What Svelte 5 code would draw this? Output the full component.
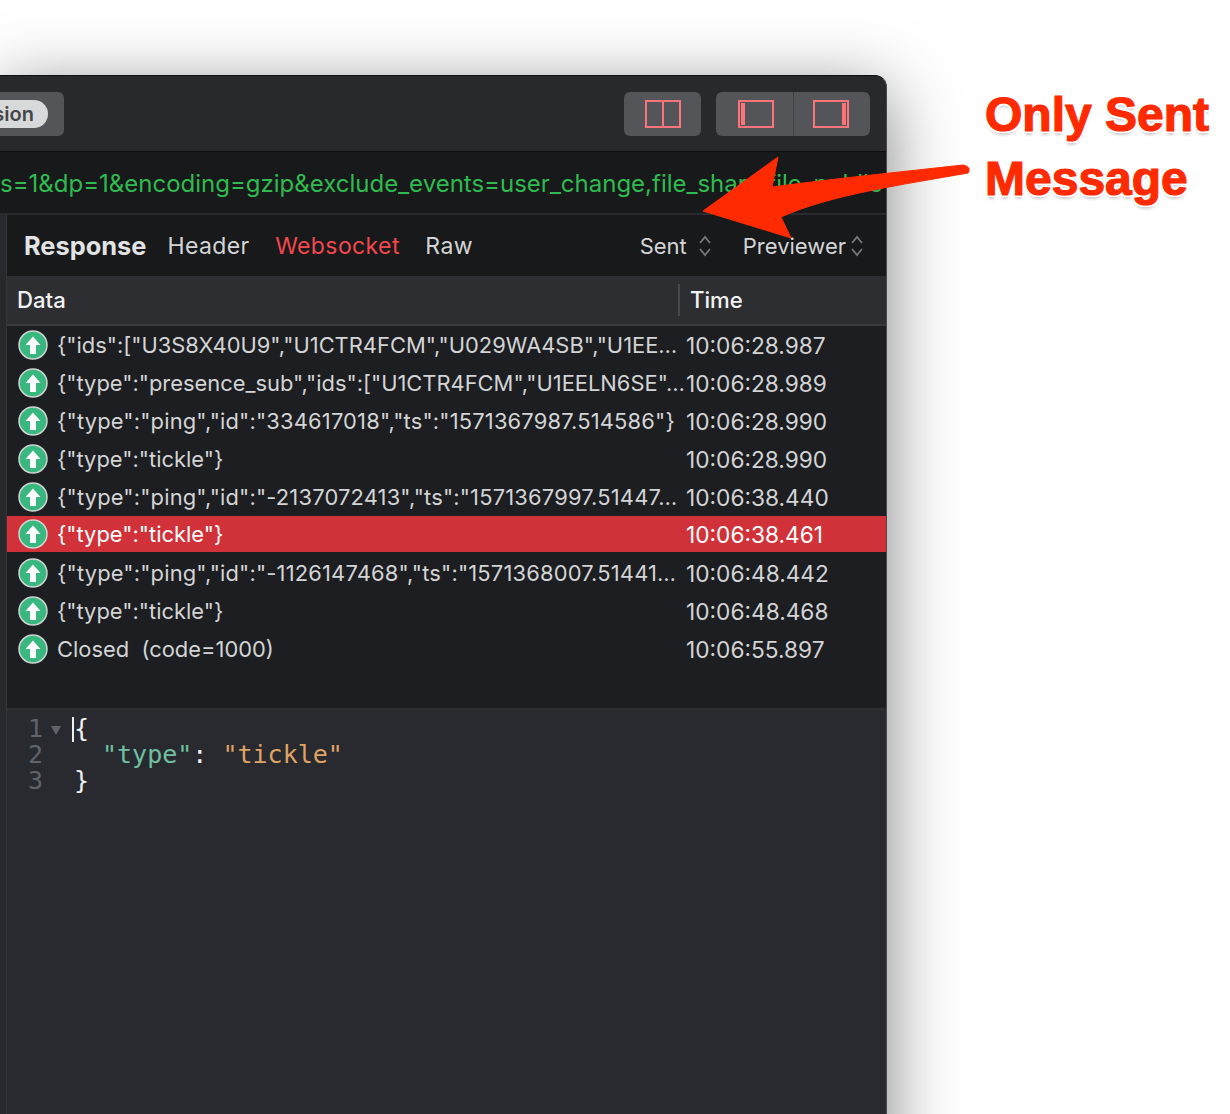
<script lang="ts">
  const rows = [
    { data: '{"ids":["U3S8X40U9","U1CTR4FCM","U029WA4SB","U1EE…', time: "10:06:28.987" },
    { data: '{"type":"presence_sub","ids":["U1CTR4FCM","U1EELN6SE"…', time: "10:06:28.989" },
    { data: '{"type":"ping","id":"334617018","ts":"1571367987.514586"}', time: "10:06:28.990", wide: true },
    { data: '{"type":"tickle"}', time: "10:06:28.990" },
    { data: '{"type":"ping","id":"-2137072413","ts":"1571367997.51447…', time: "10:06:38.440", wide: true },
    { data: '{"type":"tickle"}', time: "10:06:38.461", selected: true },
    { data: '{"type":"ping","id":"-1126147468","ts":"1571368007.51441…', time: "10:06:48.442", wide: true },
    { data: '{"type":"tickle"}', time: "10:06:48.468" },
    { data: "Closed  (code=1000)", time: "10:06:55.897" }
  ];
</script>

<div class="page">
  <div class="window">
    <div class="toolbar">
      <div class="session"><span class="pill">Session</span></div>
      <div class="layouts">
        <div class="btn">
          <svg width="38" height="30" viewBox="0 0 38 30"><path d="M2 2h34v26H2zM19 2v26" /></svg>
        </div>
        <div class="btn-group">
          <div class="btn">
            <svg width="38" height="30" viewBox="0 0 38 30"><path d="M2 2h34v26H2z" /><rect x="4" y="4" width="4" height="22" /></svg>
          </div>
          <div class="btn">
            <svg width="38" height="30" viewBox="0 0 38 30"><path d="M2 2h34v26H2z" /><rect x="30" y="4" width="4" height="22" /></svg>
          </div>
        </div>
      </div>
    </div>

    <div class="url">s=1&amp;dp=1&amp;encoding=gzip&amp;exclude_events=user_change,file_share,file_public</div>

    <div class="content">
      <div class="tabs">
        <span class="title">Response</span>
        <span class="tab">Header</span>
        <span class="tab active">Websocket</span>
        <span class="tab">Raw</span>
        <span class="select sent">Sent
          <svg width="14" height="22" viewBox="0 0 14 22"><path d="M2 8l5-6 5 6M2 14l5 6 5-6" /></svg>
        </span>
        <span class="select">Previewer
          <svg width="14" height="22" viewBox="0 0 14 22"><path d="M2 8l5-6 5 6M2 14l5 6 5-6" /></svg>
        </span>
      </div>

      <div class="head">
        <div class="head-data">Data</div>
        <div class="head-time">Time</div>
      </div>

      <div class="list">
        {#each rows as row}
          <div class="row" class:selected={row.selected}>
            <svg class="up" width="30" height="30" viewBox="0 0 30 30">
              <circle cx="15" cy="15" r="14" fill="#38b77f" stroke="#cfd3d1" stroke-width="1.5" />
              <path d="M15 6.500L22.500 15H18V24H12V15H7.500Z" fill="#fff" />
            </svg>
            <span class="data" class:wide={row.wide}>{row.data}</span>
            <span class="time">{row.time}</span>
          </div>
        {/each}
      </div>

      <div class="editor">
        <div class="gutter">
          <div class="ln">1<i class="fold"></i></div>
          <div class="ln">2</div>
          <div class="ln">3</div>
        </div>
        <div class="code">
          <div class="line"><span class="caret"></span>{"{"}</div>
          <div class="line"><span class="key">"type"</span>: <span class="str">"tickle"</span></div>
          <div class="line">{"}"}</div>
        </div>
      </div>
    </div>
  </div>

  <svg class="arrow" width="1230" height="1114" viewBox="0 0 1230 1114">
    <path d="M703 211L778 157L772 187C840 178 900 172 963 165Q972 167 968 173C900 185 830 195 781 217L791 238Z" />
  </svg>
  <div class="note">Only Sent<br />Message</div>
</div>

<style>
  :global(body) {
    margin: 0;
    background: #fff;
  }

  .page {
    position: relative;
    height: 1114px;
    overflow: hidden;
    padding-top: 75px;
    box-sizing: border-box;
    font-family: Inter, "Liberation Sans", sans-serif;
  }

  .window {
    width: 887px;
    height: 1100px;
    box-sizing: border-box;
    background: #28292d;
    border: 1px solid #111;
    border-left: 0;
    border-right-color: #4a4b4e;
    border-radius: 0 12px 0 0;
    box-shadow: 0 16px 70px rgba(0, 0, 0, 0.5);
    overflow: hidden;
  }

  .toolbar {
    height: 76px;
    box-sizing: border-box;
    display: flex;
    justify-content: space-between;
    padding: 16px 16px 0 0;
    border-bottom: 1px solid #0e0e10;
  }

  .session {
    height: 44px;
    width: 104px;
    margin-left: -40px;
    background: #545559;
    border-radius: 6px;
    display: flex;
    align-items: center;
    justify-content: flex-end;
    padding-right: 16px;
    box-sizing: border-box;
  }

  .pill {
    background: #d8d9da;
    color: #45464a;
    font-size: 20px;
    font-weight: 600;
    height: 28px;
    line-height: 28px;
    padding: 0 14px;
    border-radius: 14px;
  }

  .layouts {
    display: flex;
    gap: 15px;
  }

  .btn-group {
    display: flex;
  }

  .btn {
    width: 77px;
    height: 44px;
    background: #545559;
    border-radius: 6px;
    display: flex;
    align-items: center;
    justify-content: center;
    box-sizing: border-box;
  }

  .btn-group .btn {
    border-radius: 6px 0 0 6px;
    padding-left: 2px;
  }

  .btn-group .btn + .btn {
    border-left: 1px solid #3e3f43;
    border-radius: 0 6px 6px 0;
    padding: 0 3px 0 0;
  }

  .btn svg path {
    fill: none;
    stroke: #fc747a;
    stroke-width: 2;
  }

  .btn svg rect {
    fill: #fc747a;
  }

  .url {
    height: 63px;
    line-height: 64px;
    box-sizing: border-box;
    background: #18191b;
    color: #2fbb4f;
    font-size: 24px;
    white-space: nowrap;
    overflow: hidden;
    border-bottom: 2px solid #2a2b2e;
  }

  .content {
    margin-left: 6px;
    border-left: 1px solid #36373a;
    background: #1d1e21;
    height: 900px;
  }

  .tabs {
    height: 61px;
    background: #18191b;
    display: flex;
    align-items: center;
    padding: 0 22px 0 17px;
    color: #d4d5d6;
    font-size: 23px;
  }

  .title {
    font-weight: 700;
    font-size: 25.400px;
    color: #e2e3e4;
    margin-right: 21px;
  }

  .tab {
    margin-right: 25.500px;
    letter-spacing: 0.4px;
  }

  .tab.active {
    color: #f4474d;
  }

  .select {
    display: flex;
    align-items: center;
    gap: 4px;
    font-size: 22px;
  }

  .sent {
    margin-left: auto;
    margin-right: 31px;
    gap: 11px;
  }

  .select svg path {
    fill: none;
    stroke: #77787b;
    stroke-width: 1.800;
  }

  .head {
    height: 50px;
    box-sizing: border-box;
    background: #2d2e32;
    border-bottom: 2px solid #3a3b3e;
    display: flex;
    align-items: center;
    color: #f2f2f3;
    font-size: 22.200px;
    font-weight: 500;
  }

  .head-data {
    width: 671px;
    padding-left: 10px;
    box-sizing: border-box;
    line-height: 32px;
  }

  .head-time {
    height: 32px;
    line-height: 32px;
    padding-left: 10px;
    border-left: 2px solid #47484b;
  }

  .list {
    height: 384px;
    box-sizing: border-box;
    border-bottom: 2px solid #2e2f33;
  }

  .row {
    height: 38px;
    display: flex;
    align-items: center;
    padding-left: 11px;
    color: #d3d4d5;
    font-size: 21.900px;
    white-space: pre;
  }

  .row.selected {
    height: 36px;
    margin-bottom: 2px;
    background: #d13239;
    color: #fff;
  }

  .up {
    flex: none;
    margin-right: 9px;
  }

  .data {
    width: 629px;
    flex: none;
    overflow: hidden;
  }

  .data.wide {
    letter-spacing: 0.18px;
  }

  .time {
    font-size: 22.700px;
  }

  .editor {
    display: flex;
    background: #282a2f;
    height: 450px;
    padding-top: 6px;
    box-sizing: border-box;
    font-family: "DejaVu Sans Mono", monospace;
    font-size: 25px;
    line-height: 26px;
  }

  .gutter {
    width: 65px;
    flex: none;
    color: #5f636b;
    padding-left: 21px;
    box-sizing: border-box;
  }

  .ln {
    position: relative;
  }

  .fold {
    position: absolute;
    left: 23px;
    top: 10px;
    width: 0;
    height: 0;
    border: 5.500px solid transparent;
    border-top: 9px solid #5f636b;
    border-bottom: 0;
  }

  .code {
    color: #f0f0f0;
  }

  .line {
    position: relative;
    padding-left: 2px;
    white-space: pre;
  }

  .caret {
    position: absolute;
    left: 0;
    top: 1px;
    width: 2px;
    height: 25px;
    background: #f0f0f0;
  }

  .key {
    margin-left: 28px;
    color: #6fc0a2;
  }

  .str {
    color: #dfa264;
  }

  .arrow {
    position: absolute;
    left: 0;
    top: 0;
    pointer-events: none;
  }

  .arrow path {
    fill: #ff2a00;
    stroke: #ff2a00;
    stroke-width: 1;
    stroke-linejoin: round;
  }

  .note {
    position: absolute;
    left: 985px;
    top: 83px;
    font-family: "Liberation Sans", Arial, sans-serif;
    font-weight: 700;
    font-size: 48px;
    line-height: 64px;
    color: #ff2a00;
    -webkit-text-stroke: 1.200px #ff2a00;
    text-shadow:
      2px 0 #fff, -2px 0 #fff, 0 2px #fff, 0 -2px #fff,
      2px 2px #fff, -2px 2px #fff, 2px -2px #fff, -2px -2px #fff,
      0 4px 3px rgba(0, 0, 0, 0.2);
    white-space: nowrap;
  }
</style>
